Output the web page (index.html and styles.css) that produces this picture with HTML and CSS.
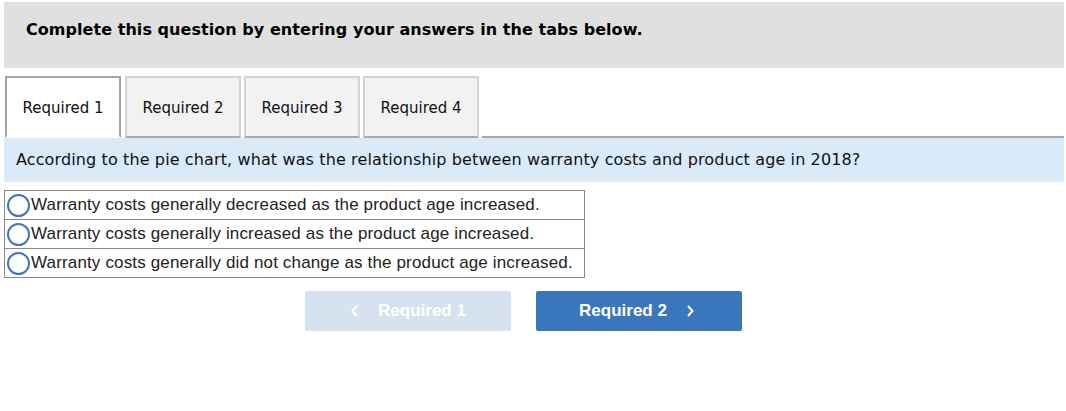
FILE: index.html
```html
<!DOCTYPE html>
<html>
<head>
<meta charset="utf-8">
<link rel="stylesheet" href="styles.css">
</head>
<body>
<div class="page">
  <div class="header">Complete this question by entering your answers in the tabs below.</div>
  <div class="tabs">
    <div class="tab active">Required 1</div>
    <div class="tab">Required 2</div>
    <div class="tab">Required 3</div>
    <div class="tab">Required 4</div>
    <div class="tab-fill"></div>
  </div>
  <div class="question">According to the pie chart, what was the relationship between warranty costs and product age in 2018?</div>
  <div class="options">
    <div class="option"><span class="radio"></span><span class="label">Warranty costs generally decreased as the product age increased.</span></div>
    <div class="option"><span class="radio"></span><span class="label">Warranty costs generally increased as the product age increased.</span></div>
    <div class="option"><span class="radio"></span><span class="label">Warranty costs generally did not change as the product age increased.</span></div>
  </div>
  <div class="nav">
    <div class="btn prev"><svg class="chev" width="10" height="14" viewBox="0 0 10 14"><path d="M7 2 L2.5 7 L7 12" fill="none" stroke="currentColor" stroke-width="2"/></svg><span>Required 1</span></div>
    <div class="btn next"><span>Required 2</span><svg class="chev" width="10" height="14" viewBox="0 0 10 14"><path d="M3 2 L7.5 7 L3 12" fill="none" stroke="currentColor" stroke-width="2"/></svg></div>
  </div>
</div>
</body>
</html>
```
FILE: styles.css
```css
html, body {
  margin: 0;
  padding: 0;
  background: #ffffff;
}
.page {
  padding: 2px 2px 0 4px;
  font-family: "DejaVu Sans", Verdana, sans-serif;
  color: #111;
}
.header {
  background: #e0e0e0;
  height: 66px;
  box-sizing: border-box;
  padding: 18px 0 0 22px;
  font-weight: bold;
  font-size: 16px;
  letter-spacing: 0.05px;
  color: #000;
}
.tabs {
  display: flex;
  margin-top: 8px;
  height: 62px;
  align-items: stretch;
  padding-left: 1px;
}
.tab {
  width: 116px;
  box-sizing: border-box;
  margin-right: 3px;
  background: #f2f2f2;
  border: 2px solid #d3d3d3;
  border-bottom: 2px solid #a9a9a9;
  display: flex;
  align-items: center;
  justify-content: center;
  font-size: 15px;
  color: #111;
  padding-top: 2px;
}
.tab.active {
  background: #ffffff;
  border: 2px solid #a3a3a3;
  border-bottom: 2px solid #ffffff;
  margin-right: 4px;
}
.tab-fill {
  flex: 1;
  border-bottom: 2px solid #a9a9a9;
}
.question {
  background: #d9eaf8;
  height: 44px;
  box-sizing: border-box;
  padding: 12px 0 0 12px;
  font-size: 16px;
  letter-spacing: 0.12px;
  color: #111;
}
.options {
  margin-top: 8px;
  width: 579px;
  border: 1px solid #8a8a8a;
}
.option {
  display: flex;
  align-items: center;
  height: 28px;
  border-top: 1px solid #8a8a8a;
  font-family: "Liberation Sans", Arial, sans-serif;
  font-size: 17px;
  color: #222;
}
.option:first-child {
  border-top: none;
}
.radio {
  width: 19px;
  height: 19px;
  border: 2px solid #3f76bb;
  border-radius: 50%;
  margin-left: 2px;
  margin-right: 1px;
  flex: none;
}
.label {
  letter-spacing: 0.15px;
}
.nav {
  display: flex;
  margin: 13px 0 0 301px;
  gap: 25px;
}
.btn {
  width: 206px;
  height: 40px;
  box-sizing: border-box;
  border-radius: 2px;
  display: flex;
  align-items: center;
  justify-content: center;
  font-family: "Liberation Sans", Arial, sans-serif;
  font-weight: bold;
  font-size: 17px;
  color: #fff;
  gap: 18px;
}
.btn.prev {
  background: #d6e2f0;
}
.btn.next {
  background: #3a76ba;
  gap: 18px;
  padding-right: 4px;
}
.chev {
  display: block;
}
```
